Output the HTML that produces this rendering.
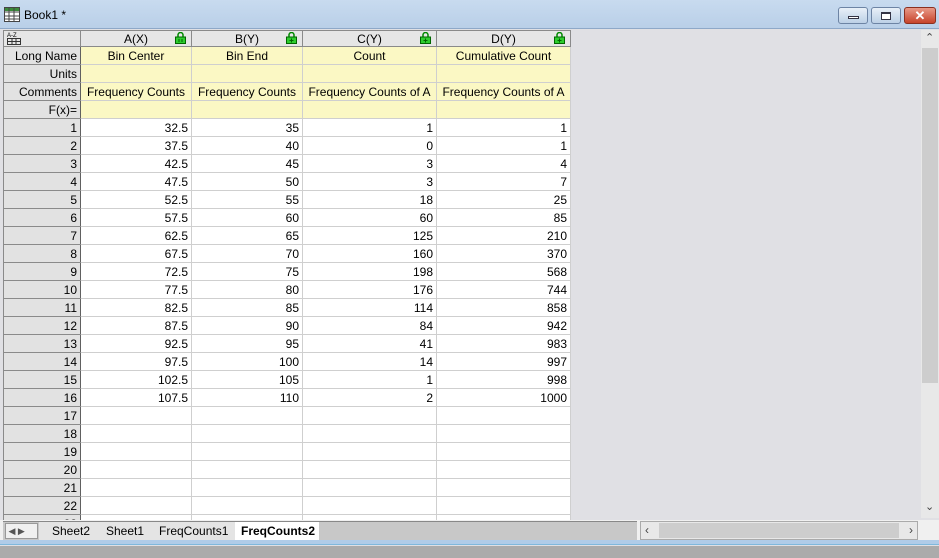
<!DOCTYPE html>
<html><head><meta charset="utf-8"><style>
*{margin:0;padding:0;box-sizing:border-box}
body{width:939px;height:558px;overflow:hidden;background:#e0e0e4;font-family:"Liberation Sans",Arial,sans-serif;font-size:12px;color:#000;position:relative}
.title{position:absolute;left:0;top:0;width:939px;height:29px;background:linear-gradient(#c8dbef,#b9cfe8);border-bottom:1px solid #8ea8c8}
.title span{position:absolute;left:24px;top:8px;font-size:12px}
.btn{position:absolute;top:7px;height:17px;border:1px solid #6d84a4;border-radius:3px;background:linear-gradient(#e8f0f8,#bcd0e6)}
.grid{position:absolute;left:3px;top:30px;width:568px;height:490px;overflow:hidden}
table{border-collapse:collapse;table-layout:fixed}
td{height:18px;padding:0 3px;white-space:nowrap;overflow:hidden;border:1px solid #cfcfcf;text-align:right;line-height:16px}
td.h{background:#e2e2e2;border-color:#8a8a8a;border-right:1px solid #606060}
tr.c td{height:16px;background:#e6e6e6;text-align:center;border-color:#8a8a8a;position:relative;line-height:14px;font-size:12px}
tr.y td{background:#fbf8c4;text-align:center}
tr.y td.h{background:#e2e2e2;text-align:right}
td.d{background:#fff}
.lock{position:absolute;right:5px;top:1px;width:11px;height:12px}
.vs{position:absolute;left:921px;top:30px;width:18px;height:488px;background:#e8e8e8}
.tabs{position:absolute;left:3px;top:521px;width:634px;height:19px;background:#c8c8c8;border-top:1px solid #888}
.tabs span{position:absolute;top:2px;font-size:12px}
</style></head><body>
<div class="title">
<svg style="position:absolute;left:4px;top:7px" width="16" height="15"><rect x="0.5" y="0.5" width="15" height="14" fill="#fff" stroke="#444"/><rect x="1" y="1" width="14" height="3" fill="#3a8a3a"/><path d="M1 5h14M1 9h14M1 12h14M5 1v14M10 1v14" stroke="#444"/></svg>
<span>Book1 *</span>
<div class="btn" style="left:838px;width:30px"><div style="position:absolute;left:9px;top:8px;width:11px;height:3px;border:1px solid #334;background:#fff"></div></div>
<div class="btn" style="left:871px;width:30px"><div style="position:absolute;left:9px;top:4px;width:10px;height:8px;border:1px solid #334;border-top-width:2px;background:#fff"></div></div>
<div class="btn" style="left:904px;width:32px;background:linear-gradient(#e89a88,#c7432a);border-color:#8a3020;color:#fff;text-align:center;font-weight:bold;font-size:13px;line-height:15px">✕</div>
</div>
<div class="grid">
<table>
<colgroup><col style="width:77px"><col style="width:111px"><col style="width:111px"><col style="width:134px"><col style="width:134px"></colgroup>
<tr class="c" style="height:16px"><td style="text-align:left"><svg style="position:absolute;left:3px;top:1px" width="14" height="13"><text x="0" y="5" font-size="6" font-family="Liberation Sans">A-Z</text><path d="M0.5 6.5h13v6h-13zM0.5 9.5h13M5 6v7M9 6v7" stroke="#333" fill="none"/></svg></td>
<td>A(X)<svg class="lock" viewBox="0 0 11 12"><path d="M3 5V3a2.5 2.5 0 015 0v2" stroke="#080" fill="none" stroke-width="1.5"/><rect x="0.5" y="5" width="10" height="6.5" fill="#2ecc2e" stroke="#060"/><path d="M4 7v3M7 7v3" stroke="#060"/></svg></td>
<td>B(Y)<svg class="lock" viewBox="0 0 11 12"><path d="M3 5V3a2.5 2.5 0 015 0v2" stroke="#080" fill="none" stroke-width="1.5"/><rect x="0.5" y="5" width="10" height="6.5" fill="#2ecc2e" stroke="#060"/><path d="M5.5 6.5v4M3.5 8.5h4" stroke="#060"/></svg></td>
<td>C(Y)<svg class="lock" viewBox="0 0 11 12"><path d="M3 5V3a2.5 2.5 0 015 0v2" stroke="#080" fill="none" stroke-width="1.5"/><rect x="0.5" y="5" width="10" height="6.5" fill="#2ecc2e" stroke="#060"/><path d="M5.5 6.5v4M3.5 8.5h4" stroke="#060"/></svg></td>
<td>D(Y)<svg class="lock" viewBox="0 0 11 12"><path d="M3 5V3a2.5 2.5 0 015 0v2" stroke="#080" fill="none" stroke-width="1.5"/><rect x="0.5" y="5" width="10" height="6.5" fill="#2ecc2e" stroke="#060"/><path d="M5.5 6.5v4M3.5 8.5h4" stroke="#060"/></svg></td></tr>
<tr class="y"><td class="h">Long Name</td><td>Bin Center</td><td>Bin End</td><td>Count</td><td>Cumulative Count</td></tr>
<tr class="y"><td class="h">Units</td><td></td><td></td><td></td><td></td></tr>
<tr class="y"><td class="h">Comments</td><td>Frequency Counts</td><td>Frequency Counts</td><td>Frequency Counts of A</td><td>Frequency Counts of A</td></tr>
<tr class="y"><td class="h">F(x)=</td><td></td><td></td><td></td><td></td></tr>
<tr><td class="h">1</td><td class="d">32.5</td><td class="d">35</td><td class="d">1</td><td class="d">1</td></tr>
<tr><td class="h">2</td><td class="d">37.5</td><td class="d">40</td><td class="d">0</td><td class="d">1</td></tr>
<tr><td class="h">3</td><td class="d">42.5</td><td class="d">45</td><td class="d">3</td><td class="d">4</td></tr>
<tr><td class="h">4</td><td class="d">47.5</td><td class="d">50</td><td class="d">3</td><td class="d">7</td></tr>
<tr><td class="h">5</td><td class="d">52.5</td><td class="d">55</td><td class="d">18</td><td class="d">25</td></tr>
<tr><td class="h">6</td><td class="d">57.5</td><td class="d">60</td><td class="d">60</td><td class="d">85</td></tr>
<tr><td class="h">7</td><td class="d">62.5</td><td class="d">65</td><td class="d">125</td><td class="d">210</td></tr>
<tr><td class="h">8</td><td class="d">67.5</td><td class="d">70</td><td class="d">160</td><td class="d">370</td></tr>
<tr><td class="h">9</td><td class="d">72.5</td><td class="d">75</td><td class="d">198</td><td class="d">568</td></tr>
<tr><td class="h">10</td><td class="d">77.5</td><td class="d">80</td><td class="d">176</td><td class="d">744</td></tr>
<tr><td class="h">11</td><td class="d">82.5</td><td class="d">85</td><td class="d">114</td><td class="d">858</td></tr>
<tr><td class="h">12</td><td class="d">87.5</td><td class="d">90</td><td class="d">84</td><td class="d">942</td></tr>
<tr><td class="h">13</td><td class="d">92.5</td><td class="d">95</td><td class="d">41</td><td class="d">983</td></tr>
<tr><td class="h">14</td><td class="d">97.5</td><td class="d">100</td><td class="d">14</td><td class="d">997</td></tr>
<tr><td class="h">15</td><td class="d">102.5</td><td class="d">105</td><td class="d">1</td><td class="d">998</td></tr>
<tr><td class="h">16</td><td class="d">107.5</td><td class="d">110</td><td class="d">2</td><td class="d">1000</td></tr>
<tr><td class="h">17</td><td class="d"></td><td class="d"></td><td class="d"></td><td class="d"></td></tr>
<tr><td class="h">18</td><td class="d"></td><td class="d"></td><td class="d"></td><td class="d"></td></tr>
<tr><td class="h">19</td><td class="d"></td><td class="d"></td><td class="d"></td><td class="d"></td></tr>
<tr><td class="h">20</td><td class="d"></td><td class="d"></td><td class="d"></td><td class="d"></td></tr>
<tr><td class="h">21</td><td class="d"></td><td class="d"></td><td class="d"></td><td class="d"></td></tr>
<tr><td class="h">22</td><td class="d"></td><td class="d"></td><td class="d"></td><td class="d"></td></tr>
<tr><td class="h">23</td><td class="d"></td><td class="d"></td><td class="d"></td><td class="d"></td></tr>
</table>
</div>
<div class="vs"><div style="position:absolute;left:1px;top:18px;width:16px;height:335px;background:#cdcdcd"></div>
<span style="position:absolute;left:4px;top:1px;font-size:11px;color:#444">&#8963;</span>
<span style="position:absolute;left:4px;top:470px;font-size:11px;color:#444">&#8964;</span></div>
<div style="position:absolute;left:0;top:520px;width:939px;height:21px;background:#f0f0f0"></div>
<div class="tabs">
<div style="position:absolute;left:2px;top:1px;width:33px;height:16px;background:#f0f0f0;border:1px solid #999;font-size:9px;color:#555;line-height:14px">&nbsp;◀ ▶</div>
<div style="position:absolute;left:36px;top:0;width:196px;height:18px;background:#e4e4e4"></div>
<div style="position:absolute;left:232px;top:0;width:84px;height:18px;background:#fff"></div>
<span style="left:49px">Sheet2</span><span style="left:103px">Sheet1</span><span style="left:156px">FreqCounts1</span><span style="left:238px;font-weight:bold">FreqCounts2</span>
</div>
<div style="position:absolute;left:640px;top:521px;width:278px;height:19px;background:#e8e8e8;border:1px solid #aaa"><div style="position:absolute;left:18px;top:1px;width:240px;height:15px;background:#cdcdcd"></div><span style="position:absolute;left:4px;top:1px;color:#444">‹</span><span style="position:absolute;right:4px;top:1px;color:#444">›</span></div>
<div style="position:absolute;left:0;top:540px;width:939px;height:5px;background:#b0cce8;border-bottom:1px solid #7fb8dc"></div>
<div style="position:absolute;left:0;top:546px;width:939px;height:12px;background:#ababab"></div>
</body></html>
